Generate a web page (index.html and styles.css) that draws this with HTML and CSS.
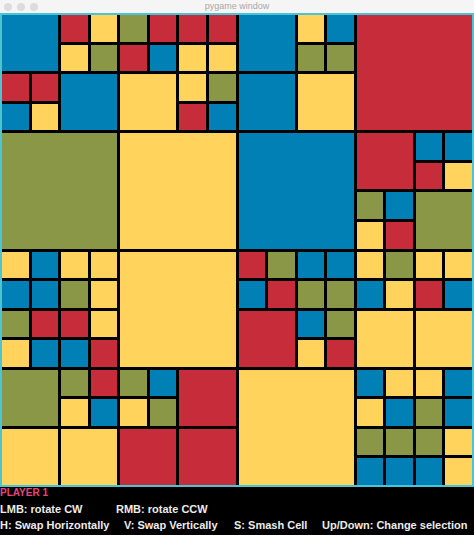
FILE: index.html
```html
<!DOCTYPE html>
<html>
<head>
<meta charset="utf-8">
<title>pygame window</title>
<link rel="stylesheet" href="styles.css">
</head>
<body>
<div class="titlebar">
  <div class="lights"><span class="light"></span><span class="light"></span><span class="light"></span></div>
  <div class="title">pygame window</div>
</div>
<div class="board">
  <div class="q">
    <!-- Q1 top-left -->
    <div class="q">
      <div class="q">
        <div class="b"></div>
        <div class="q"><div class="r"></div><div class="y"></div><div class="y"></div><div class="o"></div></div>
        <div class="q"><div class="r"></div><div class="r"></div><div class="b"></div><div class="y"></div></div>
        <div class="b"></div>
      </div>
      <div class="q">
        <div class="q"><div class="o"></div><div class="r"></div><div class="r"></div><div class="b"></div></div>
        <div class="q"><div class="r"></div><div class="r"></div><div class="y"></div><div class="y"></div></div>
        <div class="y"></div>
        <div class="q"><div class="y"></div><div class="o"></div><div class="r"></div><div class="b"></div></div>
      </div>
      <div class="o"></div>
      <div class="y"></div>
    </div>
    <!-- Q2 top-right -->
    <div class="q">
      <div class="q">
        <div class="b"></div>
        <div class="q"><div class="y"></div><div class="b"></div><div class="o"></div><div class="o"></div></div>
        <div class="b"></div>
        <div class="y"></div>
      </div>
      <div class="r"></div>
      <div class="b"></div>
      <div class="q">
        <div class="r"></div>
        <div class="q"><div class="b"></div><div class="b"></div><div class="r"></div><div class="y"></div></div>
        <div class="q"><div class="o"></div><div class="b"></div><div class="y"></div><div class="r"></div></div>
        <div class="o"></div>
      </div>
    </div>
    <!-- Q3 bottom-left -->
    <div class="q">
      <div class="q">
        <div class="q"><div class="y"></div><div class="b"></div><div class="b"></div><div class="b"></div></div>
        <div class="q"><div class="y"></div><div class="y"></div><div class="o"></div><div class="y"></div></div>
        <div class="q"><div class="o"></div><div class="r"></div><div class="y"></div><div class="b"></div></div>
        <div class="q"><div class="r"></div><div class="y"></div><div class="b"></div><div class="r"></div></div>
      </div>
      <div class="y"></div>
      <div class="q">
        <div class="o"></div>
        <div class="q"><div class="o"></div><div class="r"></div><div class="y"></div><div class="b"></div></div>
        <div class="y"></div>
        <div class="y"></div>
      </div>
      <div class="q">
        <div class="q"><div class="o"></div><div class="b"></div><div class="y"></div><div class="o"></div></div>
        <div class="r"></div>
        <div class="r"></div>
        <div class="r"></div>
      </div>
    </div>
    <!-- Q4 bottom-right -->
    <div class="q">
      <div class="q">
        <div class="q"><div class="r"></div><div class="o"></div><div class="b"></div><div class="r"></div></div>
        <div class="q"><div class="b"></div><div class="b"></div><div class="o"></div><div class="o"></div></div>
        <div class="r"></div>
        <div class="q"><div class="b"></div><div class="o"></div><div class="y"></div><div class="r"></div></div>
      </div>
      <div class="q">
        <div class="q"><div class="y"></div><div class="o"></div><div class="b"></div><div class="y"></div></div>
        <div class="q"><div class="y"></div><div class="y"></div><div class="r"></div><div class="b"></div></div>
        <div class="y"></div>
        <div class="y"></div>
      </div>
      <div class="y"></div>
      <div class="q">
        <div class="q"><div class="b"></div><div class="y"></div><div class="y"></div><div class="b"></div></div>
        <div class="q"><div class="y"></div><div class="b"></div><div class="o"></div><div class="b"></div></div>
        <div class="q"><div class="o"></div><div class="o"></div><div class="b"></div><div class="b"></div></div>
        <div class="q"><div class="o"></div><div class="y"></div><div class="b"></div><div class="y"></div></div>
      </div>
    </div>
  </div>
</div>
<div class="panel">
  <div class="player">PLAYER 1</div>
  <div class="row"><span class="c116">LMB: rotate CW</span><span>RMB: rotate CCW</span></div>
  <div class="row"><span class="c124">H: Swap Horizontally</span><span class="c110">V: Swap Vertically</span><span class="c88">S: Smash Cell</span><span>Up/Down: Change selection</span></div>
</div>
</body>
</html>
```

FILE: styles.css
```css
html, body {
  margin: 0;
  padding: 0;
  background: #000;
  width: 474px;
  height: 535px;
  overflow: hidden;
}

.titlebar {
  height: 13px;
  background: #f5f5f5;
  position: relative;
  display: flex;
  align-items: center;
  justify-content: center;
}

.lights {
  position: absolute;
  left: 4px;
  top: 3px;
  display: flex;
  gap: 5px;
}

.light {
  width: 8px;
  height: 8px;
  border-radius: 50%;
  background: #dcdcdc;
}

.title {
  font-family: "Liberation Sans", Arial, sans-serif;
  font-size: 9px;
  color: #a8a8a8;
  line-height: 13px;
}

.board {
  width: 470px;
  height: 470px;
  border: 2px solid #4bc4d5;
  display: grid;
}

.q {
  display: grid;
  grid-template-columns: 1fr 1fr;
  grid-template-rows: 1fr 1fr;
  gap: 3px;
  background: #000;
  min-width: 0;
  min-height: 0;
}

.board > .q {
  width: 470px;
  height: 470px;
}

.b { background: #0180b5; }
.r { background: #c72c3a; }
.y { background: #ffd35c; }
.o { background: #8a9747; }

.panel {
  height: 48px;
  background: #000;
  font-family: "Liberation Sans", Arial, sans-serif;
  font-weight: bold;
  font-size: 11px;
  line-height: 12px;
  color: #ececec;
  display: flex;
  flex-direction: column;
  gap: 4px;
  padding-top: 0;
  box-sizing: border-box;
}

.player {
  color: #e8457c;
  font-size: 10px;
}

.row {
  display: flex;
  white-space: nowrap;
}

.c116 { width: 116px; }
.c124 { width: 124px; }
.c110 { width: 110px; }
.c88 { width: 88px; }
```
